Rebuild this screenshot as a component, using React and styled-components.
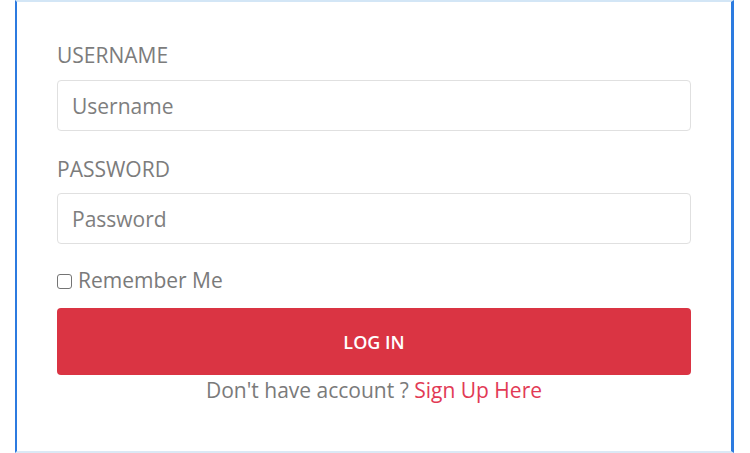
import React from "react";
import styled, { createGlobalStyle } from "styled-components";

const Global = createGlobalStyle`
  html, body { margin: 0; padding: 0; background: #ffffff; }
  body { font-family: "Open Sans", "Noto Sans", sans-serif; }
  * { box-sizing: border-box; }
`;

const Panel = styled.div`
  margin-left: 15px;
  width: 719px;
  height: 453px;
  border-left: 2px solid #2c7be0;
  border-right: 3px solid #2c7be0;
  border-top: 2px solid #d3e6f6;
  border-bottom: 2px solid #dbe9f5;
  padding: 39px 40px 0 40px;
  display: flex;
  flex-direction: column;
`;

const Label = styled.label`
  display: block;
  font-size: 21px;
  line-height: 28px;
  color: #7c7c7c;
  margin-bottom: ${(p) => p.$gap}px;
`;

const Input = styled.input`
  display: block;
  width: 100%;
  height: 51px;
  border: 1px solid #e0e0e0;
  border-radius: 4px;
  padding: 0 14px;
  font-family: inherit;
  font-size: 21px;
  color: #555;
  outline: none;
  flex-shrink: 0;
  margin-bottom: ${(p) => p.$gap}px;
  &::placeholder { color: #7e7e7e; }
`;

const CheckRow = styled.label`
  display: flex;
  align-items: center;
  gap: 6px;
  font-size: 21px;
  line-height: 28px;
  color: #7a7a7a;
  margin-bottom: 14px;
`;

const Box = styled.span`
  width: 15px;
  height: 15px;
  border: 1.5px solid #747474;
  border-radius: 3px;
  display: inline-block;
  margin-top: 2px;
`;

const Button = styled.button`
  width: 100%;
  height: 67px;
  flex-shrink: 0;
  border: none;
  border-radius: 4px;
  background: #da3443;
  color: #fff;
  font-family: inherit;
  font-weight: 600;
  font-size: 18px;
`;

const Footer = styled.div`
  text-align: center;
  font-size: 21px;
  line-height: 28px;
  color: #7a7a7a;
  margin-top: 1px;
`;

const Link = styled.a`
  color: #e23a55;
  text-decoration: none;
`;

export default function App() {
  return (
    <>
      <Global />
      <Panel>
        <Label $gap={11}>USERNAME</Label>
        <Input placeholder="Username" $gap={24} />
        <Label $gap={10}>PASSWORD</Label>
        <Input placeholder="Password" type="password" $gap={22} />
        <CheckRow>
          <Box />
          Remember Me
        </CheckRow>
        <Button>LOG IN</Button>
        <Footer>
          Don't have account ? <Link href="#">Sign Up Here</Link>
        </Footer>
      </Panel>
    </>
  );
}
